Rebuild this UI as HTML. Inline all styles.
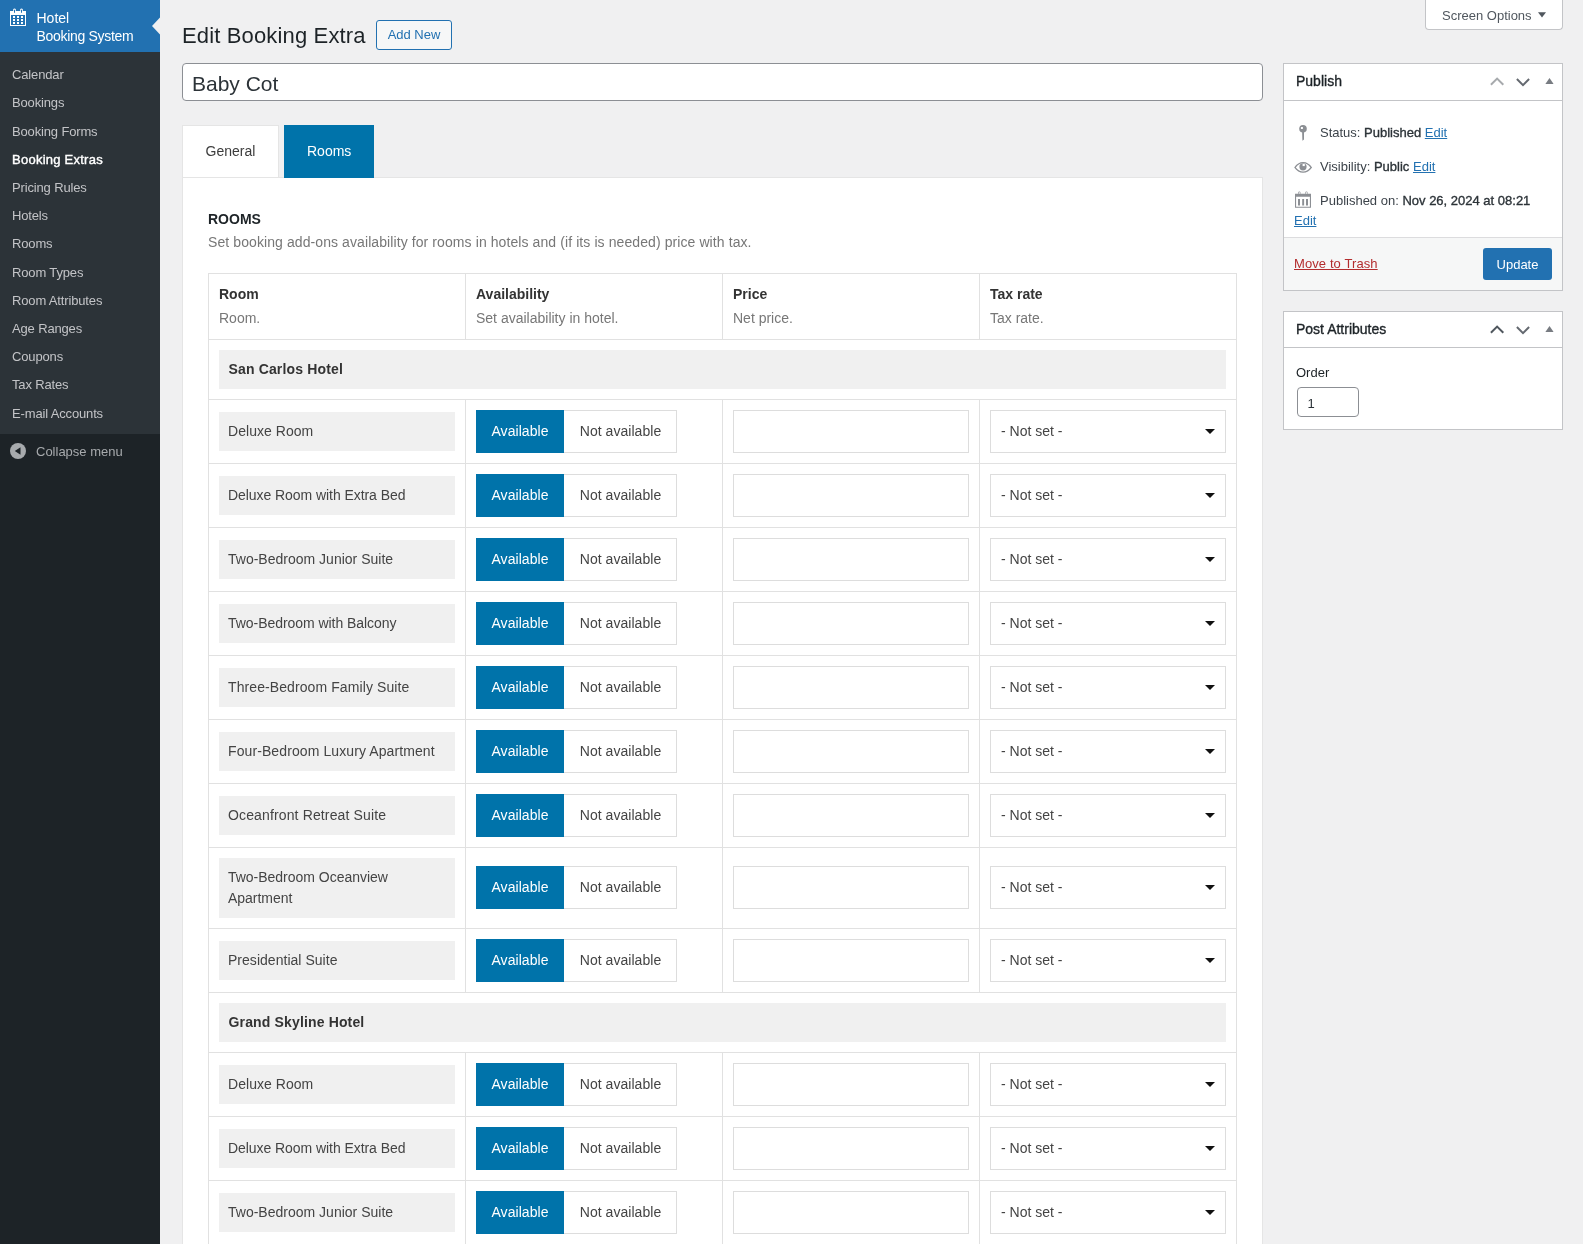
<!DOCTYPE html>
<html><head><meta charset="utf-8"><title>Edit Booking Extra</title><style>
*{box-sizing:border-box;margin:0;padding:0}
html,body{width:1583px;height:1244px;overflow:hidden}
body{will-change:transform;background:#f0f0f1;font-family:"Liberation Sans", sans-serif;color:#3c434a;position:relative}
.a{position:absolute;white-space:nowrap}
#side{position:absolute;left:0;top:0;width:160px;height:1244px;background:#1d2327}
#head{position:absolute;left:0;top:0;width:160px;height:52px;background:#2271b1}
#sub{position:absolute;left:0;top:52px;width:160px;height:382px;background:#2c3338}
.mi{position:absolute;left:12px;font-size:13px;line-height:18.2px;color:#c3c4c7;letter-spacing:-0.15px}
.mi.cur{color:#fff;-webkit-text-stroke:0.4px currentColor;letter-spacing:0.25px}
.panel{position:absolute;left:182px;top:177px;width:1081px;height:1100px;background:#fff;border:1px solid #e5e5e5}
.tb{position:absolute;border-color:#e1e1e1;border-style:solid;border-width:0}
.gbox{position:absolute;background:#f0f0f0;font-size:14px;line-height:21px;padding:9px 9px;color:#444;letter-spacing:-0.06px}
.btnA{position:absolute;background:#0073aa;color:#fff;font-size:14px;text-align:center;letter-spacing:0.05px}
.btnN{position:absolute;background:#fff;border:1px solid #dddddd;border-left:0;color:#444;font-size:14px;text-align:center;letter-spacing:0.04px;padding-left:1px}
.inp{position:absolute;background:#fff;border:1px solid #dddddd}
.sel{position:absolute;background:#fff;border:1px solid #dddddd;font-size:14px;color:#444}
.pb{position:absolute;background:#fff;border:1px solid #c3c4c7}
.sb{font-weight:normal;-webkit-text-stroke:0.35px currentColor}
</style></head><body>
<div id="side">
<div id="head">
<svg class="a" style="left:0;top:0" width="40" height="40" viewBox="0 0 40 40">
<path fill="#fff" fill-rule="evenodd" d="M10 11H13.2V9.3A1.5 1.5 0 0 1 15.8 9.3V11H20.2V9.3A1.5 1.5 0 0 1 22.8 9.3V11H26V26H10Z M11 15H25V25H11Z M14 9.8V12.8H15V9.8Z M21 9.8V12.8H22V9.8Z"/>
<g fill="#fff"><rect x="13" y="16" width="2" height="2"/><rect x="17" y="16" width="2" height="2"/><rect x="21" y="16" width="2" height="2"/>
<rect x="13" y="19" width="2" height="2"/><rect x="17" y="19" width="2" height="2"/><rect x="21" y="19" width="2" height="2"/>
<rect x="13" y="22" width="2" height="2"/><rect x="17" y="22" width="2" height="2"/><rect x="21" y="22" width="2" height="2"/></g>
</svg>
<div class="a" style="left:36.5px;top:9.00px;font-size:14px;line-height:18px;color:#fff">Hotel<br><span style="letter-spacing:-0.3px">Booking System</span></div>
</div>
<svg class="a" style="left:152px;top:17px" width="8" height="18" viewBox="0 0 8 18"><path d="M8 0.5L0 9L8 17.5Z" fill="#f0f0f1"/></svg>
<div id="sub">
<div class="mi" style="top:14.00px">Calendar</div>
<div class="mi" style="top:42.00px">Bookings</div>
<div class="mi" style="top:71.00px">Booking Forms</div>
<div class="mi cur" style="top:99.00px">Booking Extras</div>
<div class="mi" style="top:127.00px">Pricing Rules</div>
<div class="mi" style="top:155.00px">Hotels</div>
<div class="mi" style="top:183.00px">Rooms</div>
<div class="mi" style="top:212.00px">Room Types</div>
<div class="mi" style="top:240.00px">Room Attributes</div>
<div class="mi" style="top:268.00px">Age Ranges</div>
<div class="mi" style="top:296.00px">Coupons</div>
<div class="mi" style="top:324.00px">Tax Rates</div>
<div class="mi" style="top:353.00px">E-mail Accounts</div>
</div>
<svg class="a" style="left:10px;top:443px" width="16" height="16" viewBox="0 0 16 16"><circle cx="8" cy="8" r="8" fill="#a7aaad"/><path d="M10.5 4.2V11.8L4.8 8Z" fill="#1d2327"/></svg>
<div class="a" style="left:36px;top:443.00px;font-size:13px;line-height:18px;color:#a7aaad">Collapse menu</div>
</div>
<div class="a" style="left:182px;top:22.00px;font-size:22px;line-height:28px;color:#1d2327;letter-spacing:0.15px">Edit Booking Extra</div>
<div class="a" style="left:376px;top:20px;width:76px;height:30px;border:1px solid #2271b1;border-radius:3px;background:#f6f7f7;color:#2271b1;font-size:13px;line-height:28px;text-align:center">Add New</div>
<div class="a" style="left:1425px;top:-1px;width:138px;height:31px;border:1px solid #c3c4c7;border-top:0;border-radius:0 0 4px 4px;background:#fff"></div>
<div class="a" style="left:1442px;top:7.00px;font-size:13px;line-height:18px;color:#50575e">Screen Options</div>
<svg class="a" style="left:1537px;top:11px" width="10" height="8" viewBox="0 0 10 8"><path d="M1 1.2H9L5 6.5Z" fill="#50575e"/></svg>
<div class="a" style="left:182px;top:63px;width:1081px;height:38px;border:1px solid #8c8f94;border-radius:4px;background:#fff"></div>
<div class="a" style="left:192px;top:70.00px;font-size:21px;line-height:28px;color:#2c3338">Baby Cot</div>
<div class="a" style="left:182px;top:125px;width:97px;height:52px;background:#fff;border:1px solid #e5e5e5;border-bottom:0;z-index:2"></div>
<div class="a" style="left:205.5px;top:142.00px;font-size:14px;line-height:18px;color:#3c3c3c;z-index:3">General</div>
<div class="a" style="left:284px;top:125px;width:90px;height:53px;background:#0073aa;z-index:2"></div>
<div class="a" style="left:307px;top:142.00px;font-size:14px;line-height:18px;color:#fff;z-index:3">Rooms</div>
<div class="panel"></div>
<div class="a" style="left:208px;top:210.00px;font-size:14px;line-height:18px;font-weight:bold;color:#1d2327">ROOMS</div>
<div class="a" style="left:208px;top:233.00px;font-size:14px;line-height:18px;color:#777;letter-spacing:0.09px">Set booking add-ons availability for rooms in hotels and (if its is needed) price with tax.</div>
<div class="a" style="left:208px;top:273px;width:1029px;height:1px;background:#e1e1e1"></div>
<div class="a" style="left:208px;top:273px;width:1px;height:67px;background:#e1e1e1"></div>
<div class="a" style="left:465px;top:273px;width:1px;height:67px;background:#e1e1e1"></div>
<div class="a" style="left:722px;top:273px;width:1px;height:67px;background:#e1e1e1"></div>
<div class="a" style="left:979px;top:273px;width:1px;height:67px;background:#e1e1e1"></div>
<div class="a" style="left:1236px;top:273px;width:1px;height:67px;background:#e1e1e1"></div>
<div class="a" style="left:219px;top:285.00px;font-size:14px;line-height:18px;font-weight:bold;color:#333">Room</div>
<div class="a" style="left:219px;top:309.00px;font-size:14px;line-height:18px;color:#777">Room.</div>
<div class="a" style="left:476px;top:285.00px;font-size:14px;line-height:18px;font-weight:bold;color:#333">Availability</div>
<div class="a" style="left:476px;top:309.00px;font-size:14px;line-height:18px;color:#777">Set availability in hotel.</div>
<div class="a" style="left:733px;top:285.00px;font-size:14px;line-height:18px;font-weight:bold;color:#333">Price</div>
<div class="a" style="left:733px;top:309.00px;font-size:14px;line-height:18px;color:#777">Net price.</div>
<div class="a" style="left:990px;top:285.00px;font-size:14px;line-height:18px;font-weight:bold;color:#333">Tax rate</div>
<div class="a" style="left:990px;top:309.00px;font-size:14px;line-height:18px;color:#777">Tax rate.</div>
<div class="a" style="left:208px;top:339px;width:1029px;height:1px;background:#e1e1e1"></div>
<div class="a" style="left:208px;top:339px;width:1px;height:60px;background:#e1e1e1"></div>
<div class="a" style="left:1236px;top:339px;width:1px;height:60px;background:#e1e1e1"></div>
<div class="gbox" style="left:219px;top:350px;width:1007px;height:39px;font-weight:bold;color:#333;padding-left:9.5px;letter-spacing:0.15px">San Carlos Hotel</div>
<div class="a" style="left:208px;top:399px;width:1029px;height:1px;background:#e1e1e1"></div>
<div class="a" style="left:208px;top:399px;width:1px;height:64px;background:#e1e1e1"></div>
<div class="a" style="left:465px;top:399px;width:1px;height:64px;background:#e1e1e1"></div>
<div class="a" style="left:722px;top:399px;width:1px;height:64px;background:#e1e1e1"></div>
<div class="a" style="left:979px;top:399px;width:1px;height:64px;background:#e1e1e1"></div>
<div class="a" style="left:1236px;top:399px;width:1px;height:64px;background:#e1e1e1"></div>
<div class="gbox" style="left:219px;top:412.0px;width:236px;height:39px;letter-spacing:0.04px">Deluxe Room</div>
<div class="btnA" style="left:476px;top:410.0px;width:88px;height:43px;line-height:43px">Available</div>
<div class="btnN" style="left:564px;top:410.0px;width:113px;height:43px;line-height:41px">Not available</div>
<div class="inp" style="left:733px;top:410.0px;width:236px;height:43px"></div>
<div class="sel" style="left:990px;top:410.0px;width:236px;height:43px;line-height:41px;padding-left:10px">- Not set -</div>
<svg class="a" style="left:1204px;top:428.0px" width="12" height="7" viewBox="0 0 12 7"><path d="M1 1H11L6 6Z" fill="#111"/></svg>
<div class="a" style="left:208px;top:463px;width:1029px;height:1px;background:#e1e1e1"></div>
<div class="a" style="left:208px;top:463px;width:1px;height:64px;background:#e1e1e1"></div>
<div class="a" style="left:465px;top:463px;width:1px;height:64px;background:#e1e1e1"></div>
<div class="a" style="left:722px;top:463px;width:1px;height:64px;background:#e1e1e1"></div>
<div class="a" style="left:979px;top:463px;width:1px;height:64px;background:#e1e1e1"></div>
<div class="a" style="left:1236px;top:463px;width:1px;height:64px;background:#e1e1e1"></div>
<div class="gbox" style="left:219px;top:476.0px;width:236px;height:39px;letter-spacing:-0.06px">Deluxe Room with Extra Bed</div>
<div class="btnA" style="left:476px;top:474.0px;width:88px;height:43px;line-height:43px">Available</div>
<div class="btnN" style="left:564px;top:474.0px;width:113px;height:43px;line-height:41px">Not available</div>
<div class="inp" style="left:733px;top:474.0px;width:236px;height:43px"></div>
<div class="sel" style="left:990px;top:474.0px;width:236px;height:43px;line-height:41px;padding-left:10px">- Not set -</div>
<svg class="a" style="left:1204px;top:492.0px" width="12" height="7" viewBox="0 0 12 7"><path d="M1 1H11L6 6Z" fill="#111"/></svg>
<div class="a" style="left:208px;top:527px;width:1029px;height:1px;background:#e1e1e1"></div>
<div class="a" style="left:208px;top:527px;width:1px;height:64px;background:#e1e1e1"></div>
<div class="a" style="left:465px;top:527px;width:1px;height:64px;background:#e1e1e1"></div>
<div class="a" style="left:722px;top:527px;width:1px;height:64px;background:#e1e1e1"></div>
<div class="a" style="left:979px;top:527px;width:1px;height:64px;background:#e1e1e1"></div>
<div class="a" style="left:1236px;top:527px;width:1px;height:64px;background:#e1e1e1"></div>
<div class="gbox" style="left:219px;top:540.0px;width:236px;height:39px;letter-spacing:0.005px">Two-Bedroom Junior Suite</div>
<div class="btnA" style="left:476px;top:538.0px;width:88px;height:43px;line-height:43px">Available</div>
<div class="btnN" style="left:564px;top:538.0px;width:113px;height:43px;line-height:41px">Not available</div>
<div class="inp" style="left:733px;top:538.0px;width:236px;height:43px"></div>
<div class="sel" style="left:990px;top:538.0px;width:236px;height:43px;line-height:41px;padding-left:10px">- Not set -</div>
<svg class="a" style="left:1204px;top:556.0px" width="12" height="7" viewBox="0 0 12 7"><path d="M1 1H11L6 6Z" fill="#111"/></svg>
<div class="a" style="left:208px;top:591px;width:1029px;height:1px;background:#e1e1e1"></div>
<div class="a" style="left:208px;top:591px;width:1px;height:64px;background:#e1e1e1"></div>
<div class="a" style="left:465px;top:591px;width:1px;height:64px;background:#e1e1e1"></div>
<div class="a" style="left:722px;top:591px;width:1px;height:64px;background:#e1e1e1"></div>
<div class="a" style="left:979px;top:591px;width:1px;height:64px;background:#e1e1e1"></div>
<div class="a" style="left:1236px;top:591px;width:1px;height:64px;background:#e1e1e1"></div>
<div class="gbox" style="left:219px;top:604.0px;width:236px;height:39px;letter-spacing:-0.05px">Two-Bedroom with Balcony</div>
<div class="btnA" style="left:476px;top:602.0px;width:88px;height:43px;line-height:43px">Available</div>
<div class="btnN" style="left:564px;top:602.0px;width:113px;height:43px;line-height:41px">Not available</div>
<div class="inp" style="left:733px;top:602.0px;width:236px;height:43px"></div>
<div class="sel" style="left:990px;top:602.0px;width:236px;height:43px;line-height:41px;padding-left:10px">- Not set -</div>
<svg class="a" style="left:1204px;top:620.0px" width="12" height="7" viewBox="0 0 12 7"><path d="M1 1H11L6 6Z" fill="#111"/></svg>
<div class="a" style="left:208px;top:655px;width:1029px;height:1px;background:#e1e1e1"></div>
<div class="a" style="left:208px;top:655px;width:1px;height:64px;background:#e1e1e1"></div>
<div class="a" style="left:465px;top:655px;width:1px;height:64px;background:#e1e1e1"></div>
<div class="a" style="left:722px;top:655px;width:1px;height:64px;background:#e1e1e1"></div>
<div class="a" style="left:979px;top:655px;width:1px;height:64px;background:#e1e1e1"></div>
<div class="a" style="left:1236px;top:655px;width:1px;height:64px;background:#e1e1e1"></div>
<div class="gbox" style="left:219px;top:668.0px;width:236px;height:39px;letter-spacing:0.092px">Three-Bedroom Family Suite</div>
<div class="btnA" style="left:476px;top:666.0px;width:88px;height:43px;line-height:43px">Available</div>
<div class="btnN" style="left:564px;top:666.0px;width:113px;height:43px;line-height:41px">Not available</div>
<div class="inp" style="left:733px;top:666.0px;width:236px;height:43px"></div>
<div class="sel" style="left:990px;top:666.0px;width:236px;height:43px;line-height:41px;padding-left:10px">- Not set -</div>
<svg class="a" style="left:1204px;top:684.0px" width="12" height="7" viewBox="0 0 12 7"><path d="M1 1H11L6 6Z" fill="#111"/></svg>
<div class="a" style="left:208px;top:719px;width:1029px;height:1px;background:#e1e1e1"></div>
<div class="a" style="left:208px;top:719px;width:1px;height:64px;background:#e1e1e1"></div>
<div class="a" style="left:465px;top:719px;width:1px;height:64px;background:#e1e1e1"></div>
<div class="a" style="left:722px;top:719px;width:1px;height:64px;background:#e1e1e1"></div>
<div class="a" style="left:979px;top:719px;width:1px;height:64px;background:#e1e1e1"></div>
<div class="a" style="left:1236px;top:719px;width:1px;height:64px;background:#e1e1e1"></div>
<div class="gbox" style="left:219px;top:732.0px;width:236px;height:39px;letter-spacing:0.097px">Four-Bedroom Luxury Apartment</div>
<div class="btnA" style="left:476px;top:730.0px;width:88px;height:43px;line-height:43px">Available</div>
<div class="btnN" style="left:564px;top:730.0px;width:113px;height:43px;line-height:41px">Not available</div>
<div class="inp" style="left:733px;top:730.0px;width:236px;height:43px"></div>
<div class="sel" style="left:990px;top:730.0px;width:236px;height:43px;line-height:41px;padding-left:10px">- Not set -</div>
<svg class="a" style="left:1204px;top:748.0px" width="12" height="7" viewBox="0 0 12 7"><path d="M1 1H11L6 6Z" fill="#111"/></svg>
<div class="a" style="left:208px;top:783px;width:1029px;height:1px;background:#e1e1e1"></div>
<div class="a" style="left:208px;top:783px;width:1px;height:64px;background:#e1e1e1"></div>
<div class="a" style="left:465px;top:783px;width:1px;height:64px;background:#e1e1e1"></div>
<div class="a" style="left:722px;top:783px;width:1px;height:64px;background:#e1e1e1"></div>
<div class="a" style="left:979px;top:783px;width:1px;height:64px;background:#e1e1e1"></div>
<div class="a" style="left:1236px;top:783px;width:1px;height:64px;background:#e1e1e1"></div>
<div class="gbox" style="left:219px;top:796.0px;width:236px;height:39px;letter-spacing:0.136px">Oceanfront Retreat Suite</div>
<div class="btnA" style="left:476px;top:794.0px;width:88px;height:43px;line-height:43px">Available</div>
<div class="btnN" style="left:564px;top:794.0px;width:113px;height:43px;line-height:41px">Not available</div>
<div class="inp" style="left:733px;top:794.0px;width:236px;height:43px"></div>
<div class="sel" style="left:990px;top:794.0px;width:236px;height:43px;line-height:41px;padding-left:10px">- Not set -</div>
<svg class="a" style="left:1204px;top:812.0px" width="12" height="7" viewBox="0 0 12 7"><path d="M1 1H11L6 6Z" fill="#111"/></svg>
<div class="a" style="left:208px;top:847px;width:1029px;height:1px;background:#e1e1e1"></div>
<div class="a" style="left:208px;top:847px;width:1px;height:81px;background:#e1e1e1"></div>
<div class="a" style="left:465px;top:847px;width:1px;height:81px;background:#e1e1e1"></div>
<div class="a" style="left:722px;top:847px;width:1px;height:81px;background:#e1e1e1"></div>
<div class="a" style="left:979px;top:847px;width:1px;height:81px;background:#e1e1e1"></div>
<div class="a" style="left:1236px;top:847px;width:1px;height:81px;background:#e1e1e1"></div>
<div class="gbox" style="left:219px;top:858.0px;width:236px;height:60px;letter-spacing:-0.02px">Two-Bedroom Oceanview<br>Apartment</div>
<div class="btnA" style="left:476px;top:866.0px;width:88px;height:43px;line-height:43px">Available</div>
<div class="btnN" style="left:564px;top:866.0px;width:113px;height:43px;line-height:41px">Not available</div>
<div class="inp" style="left:733px;top:866.0px;width:236px;height:43px"></div>
<div class="sel" style="left:990px;top:866.0px;width:236px;height:43px;line-height:41px;padding-left:10px">- Not set -</div>
<svg class="a" style="left:1204px;top:884.0px" width="12" height="7" viewBox="0 0 12 7"><path d="M1 1H11L6 6Z" fill="#111"/></svg>
<div class="a" style="left:208px;top:928px;width:1029px;height:1px;background:#e1e1e1"></div>
<div class="a" style="left:208px;top:928px;width:1px;height:64px;background:#e1e1e1"></div>
<div class="a" style="left:465px;top:928px;width:1px;height:64px;background:#e1e1e1"></div>
<div class="a" style="left:722px;top:928px;width:1px;height:64px;background:#e1e1e1"></div>
<div class="a" style="left:979px;top:928px;width:1px;height:64px;background:#e1e1e1"></div>
<div class="a" style="left:1236px;top:928px;width:1px;height:64px;background:#e1e1e1"></div>
<div class="gbox" style="left:219px;top:941.0px;width:236px;height:39px;letter-spacing:0.028px">Presidential Suite</div>
<div class="btnA" style="left:476px;top:939.0px;width:88px;height:43px;line-height:43px">Available</div>
<div class="btnN" style="left:564px;top:939.0px;width:113px;height:43px;line-height:41px">Not available</div>
<div class="inp" style="left:733px;top:939.0px;width:236px;height:43px"></div>
<div class="sel" style="left:990px;top:939.0px;width:236px;height:43px;line-height:41px;padding-left:10px">- Not set -</div>
<svg class="a" style="left:1204px;top:957.0px" width="12" height="7" viewBox="0 0 12 7"><path d="M1 1H11L6 6Z" fill="#111"/></svg>
<div class="a" style="left:208px;top:992px;width:1029px;height:1px;background:#e1e1e1"></div>
<div class="a" style="left:208px;top:992px;width:1px;height:60px;background:#e1e1e1"></div>
<div class="a" style="left:1236px;top:992px;width:1px;height:60px;background:#e1e1e1"></div>
<div class="gbox" style="left:219px;top:1003px;width:1007px;height:39px;font-weight:bold;color:#333;padding-left:9.5px;letter-spacing:0.15px">Grand Skyline Hotel</div>
<div class="a" style="left:208px;top:1052px;width:1029px;height:1px;background:#e1e1e1"></div>
<div class="a" style="left:208px;top:1052px;width:1px;height:64px;background:#e1e1e1"></div>
<div class="a" style="left:465px;top:1052px;width:1px;height:64px;background:#e1e1e1"></div>
<div class="a" style="left:722px;top:1052px;width:1px;height:64px;background:#e1e1e1"></div>
<div class="a" style="left:979px;top:1052px;width:1px;height:64px;background:#e1e1e1"></div>
<div class="a" style="left:1236px;top:1052px;width:1px;height:64px;background:#e1e1e1"></div>
<div class="gbox" style="left:219px;top:1065.0px;width:236px;height:39px;letter-spacing:0.04px">Deluxe Room</div>
<div class="btnA" style="left:476px;top:1063.0px;width:88px;height:43px;line-height:43px">Available</div>
<div class="btnN" style="left:564px;top:1063.0px;width:113px;height:43px;line-height:41px">Not available</div>
<div class="inp" style="left:733px;top:1063.0px;width:236px;height:43px"></div>
<div class="sel" style="left:990px;top:1063.0px;width:236px;height:43px;line-height:41px;padding-left:10px">- Not set -</div>
<svg class="a" style="left:1204px;top:1081.0px" width="12" height="7" viewBox="0 0 12 7"><path d="M1 1H11L6 6Z" fill="#111"/></svg>
<div class="a" style="left:208px;top:1116px;width:1029px;height:1px;background:#e1e1e1"></div>
<div class="a" style="left:208px;top:1116px;width:1px;height:64px;background:#e1e1e1"></div>
<div class="a" style="left:465px;top:1116px;width:1px;height:64px;background:#e1e1e1"></div>
<div class="a" style="left:722px;top:1116px;width:1px;height:64px;background:#e1e1e1"></div>
<div class="a" style="left:979px;top:1116px;width:1px;height:64px;background:#e1e1e1"></div>
<div class="a" style="left:1236px;top:1116px;width:1px;height:64px;background:#e1e1e1"></div>
<div class="gbox" style="left:219px;top:1129.0px;width:236px;height:39px;letter-spacing:-0.06px">Deluxe Room with Extra Bed</div>
<div class="btnA" style="left:476px;top:1127.0px;width:88px;height:43px;line-height:43px">Available</div>
<div class="btnN" style="left:564px;top:1127.0px;width:113px;height:43px;line-height:41px">Not available</div>
<div class="inp" style="left:733px;top:1127.0px;width:236px;height:43px"></div>
<div class="sel" style="left:990px;top:1127.0px;width:236px;height:43px;line-height:41px;padding-left:10px">- Not set -</div>
<svg class="a" style="left:1204px;top:1145.0px" width="12" height="7" viewBox="0 0 12 7"><path d="M1 1H11L6 6Z" fill="#111"/></svg>
<div class="a" style="left:208px;top:1180px;width:1029px;height:1px;background:#e1e1e1"></div>
<div class="a" style="left:208px;top:1180px;width:1px;height:64px;background:#e1e1e1"></div>
<div class="a" style="left:465px;top:1180px;width:1px;height:64px;background:#e1e1e1"></div>
<div class="a" style="left:722px;top:1180px;width:1px;height:64px;background:#e1e1e1"></div>
<div class="a" style="left:979px;top:1180px;width:1px;height:64px;background:#e1e1e1"></div>
<div class="a" style="left:1236px;top:1180px;width:1px;height:64px;background:#e1e1e1"></div>
<div class="gbox" style="left:219px;top:1193.0px;width:236px;height:39px;letter-spacing:0.005px">Two-Bedroom Junior Suite</div>
<div class="btnA" style="left:476px;top:1191.0px;width:88px;height:43px;line-height:43px">Available</div>
<div class="btnN" style="left:564px;top:1191.0px;width:113px;height:43px;line-height:41px">Not available</div>
<div class="inp" style="left:733px;top:1191.0px;width:236px;height:43px"></div>
<div class="sel" style="left:990px;top:1191.0px;width:236px;height:43px;line-height:41px;padding-left:10px">- Not set -</div>
<svg class="a" style="left:1204px;top:1209.0px" width="12" height="7" viewBox="0 0 12 7"><path d="M1 1H11L6 6Z" fill="#111"/></svg>
<div class="a" style="left:208px;top:1244px;width:1029px;height:1px;background:#e1e1e1"></div>
<div class="a" style="left:208px;top:1244px;width:1px;height:64px;background:#e1e1e1"></div>
<div class="a" style="left:465px;top:1244px;width:1px;height:64px;background:#e1e1e1"></div>
<div class="a" style="left:722px;top:1244px;width:1px;height:64px;background:#e1e1e1"></div>
<div class="a" style="left:979px;top:1244px;width:1px;height:64px;background:#e1e1e1"></div>
<div class="a" style="left:1236px;top:1244px;width:1px;height:64px;background:#e1e1e1"></div>
<div class="gbox" style="left:219px;top:1257.0px;width:236px;height:39px;letter-spacing:-0.05px">Two-Bedroom with Balcony</div>
<div class="btnA" style="left:476px;top:1255.0px;width:88px;height:43px;line-height:43px">Available</div>
<div class="btnN" style="left:564px;top:1255.0px;width:113px;height:43px;line-height:41px">Not available</div>
<div class="inp" style="left:733px;top:1255.0px;width:236px;height:43px"></div>
<div class="sel" style="left:990px;top:1255.0px;width:236px;height:43px;line-height:41px;padding-left:10px">- Not set -</div>
<svg class="a" style="left:1204px;top:1273.0px" width="12" height="7" viewBox="0 0 12 7"><path d="M1 1H11L6 6Z" fill="#111"/></svg>
<div class="a" style="left:208px;top:1308px;width:1029px;height:1px;background:#e1e1e1"></div>
<div class="pb" style="left:1283px;top:63px;width:280px;height:228px"></div>
<div class="a" style="left:1284px;top:100px;width:278px;height:1px;background:#c3c4c7"></div>
<div class="a sb" style="left:1296px;top:72.00px;font-size:14px;line-height:18px;color:#1d2327">Publish</div>
<svg class="a" style="left:1488px;top:76px" width="70" height="12" viewBox="0 0 70 12"><path d="M2.9 8.8L9.1 2.6L15.3 8.8" stroke="#a7aaad" stroke-width="2" fill="none"/><path d="M28.9 3L35 9.1L41.1 3" stroke="#646970" stroke-width="2" fill="none"/><path d="M57.4 8H65.6L61.5 2Z" fill="#787c82"/></svg>
<svg class="a" style="left:1294px;top:124px" width="18" height="18" viewBox="0 0 18 18"><circle cx="9" cy="4.8" r="3.8" fill="#8c8f94"/><rect x="6.9" y="3" width="2" height="2" fill="#fff"/><path d="M8.1 7.8H10V15.6L8.4 16.8Z" fill="#8c8f94"/></svg>
<div class="a" style="left:1320px;top:124.00px;font-size:13px;line-height:18px;color:#3c434a">Status: <b class="sb" style="color:#2c3338">Published</b> <span style="color:#2271b1;text-decoration:underline">Edit</span></div>
<svg class="a" style="left:1293px;top:158px" width="20" height="18" viewBox="0 0 20 18"><path fill="#8c8f94" fill-rule="evenodd" d="M1.2 9.4C3.6 5.9 6.6 4 10.1 4S16.6 5.9 19.1 9.4C16.6 12.9 13.6 14.7 10.1 14.7S3.6 12.9 1.2 9.4Z M2.8 9.4C5 6.8 7.4 5.3 10.1 5.3S15.2 6.8 17.4 9.4C15.2 12 12.8 13.4 10.1 13.4S5 12 2.8 9.4Z"/><circle cx="10" cy="8.8" r="3.6" fill="#8c8f94"/><rect x="9.6" y="5.9" width="2.2" height="2.2" fill="#fff"/></svg>
<div class="a" style="left:1320px;top:158.00px;font-size:13px;line-height:18px;color:#3c434a">Visibility: <b class="sb" style="color:#2c3338">Public</b> <span style="color:#2271b1;text-decoration:underline">Edit</span></div>
<svg class="a" style="left:1294px;top:190px" width="18" height="19" viewBox="0 0 18 19"><path fill="#8c8f94" fill-rule="evenodd" d="M1 3.7H17V17.8H1Z M2.1 6.7H15.9V16.7H2.1Z"/><rect x="4.3" y="1.4" width="2.1" height="4.6" rx="1" fill="#8c8f94"/><rect x="11.4" y="1.4" width="2.1" height="4.6" rx="1" fill="#8c8f94"/><rect x="4.9" y="2.2" width="0.9" height="1.6" fill="#fff"/><rect x="12" y="2.2" width="0.9" height="1.6" fill="#fff"/><rect x="4" y="9" width="2" height="6.5" fill="#8c8f94"/><rect x="8.2" y="9" width="1.9" height="6.5" fill="#8c8f94"/><rect x="12" y="9" width="2" height="6.5" fill="#8c8f94"/></svg>
<div class="a" style="left:1320px;top:192.00px;font-size:13px;line-height:18px;color:#3c434a">Published on: <b class="sb" style="color:#2c3338">Nov 26, 2024 at 08:21</b></div>
<div class="a" style="left:1294px;top:212.00px;font-size:13px;line-height:18px;color:#2271b1;text-decoration:underline">Edit</div>
<div class="a" style="left:1284px;top:237px;width:278px;height:53px;background:#f6f7f7;border-top:1px solid #dcdcde"></div>
<div class="a" style="left:1294px;top:255.00px;font-size:13px;line-height:18px;color:#b32d2e;text-decoration:underline;letter-spacing:0.1px">Move to Trash</div>
<div class="a" style="left:1483px;top:248px;width:69px;height:32px;background:#2271b1;border-radius:3px;color:#fff;font-size:13px;line-height:34px;text-align:center">Update</div>
<div class="pb" style="left:1283px;top:311px;width:280px;height:119px"></div>
<div class="a" style="left:1284px;top:347px;width:278px;height:1px;background:#c3c4c7"></div>
<div class="a sb" style="left:1296px;top:320.00px;font-size:14px;line-height:18px;color:#1d2327;">Post Attributes</div>
<svg class="a" style="left:1488px;top:324px" width="70" height="12" viewBox="0 0 70 12"><path d="M2.9 8.8L9.1 2.6L15.3 8.8" stroke="#50575e" stroke-width="2" fill="none"/><path d="M28.9 3L35 9.1L41.1 3" stroke="#646970" stroke-width="2" fill="none"/><path d="M57.4 8H65.6L61.5 2Z" fill="#787c82"/></svg>
<div class="a" style="left:1296px;top:364.00px;font-size:13px;line-height:18px;color:#1d2327">Order</div>
<div class="a" style="left:1297px;top:387px;width:62px;height:30px;border:1px solid #8c8f94;border-radius:4px;background:#fff"></div>
<div class="a" style="left:1307.5px;top:395.00px;font-size:13px;line-height:18px;color:#2c3338">1</div>
</body></html>
